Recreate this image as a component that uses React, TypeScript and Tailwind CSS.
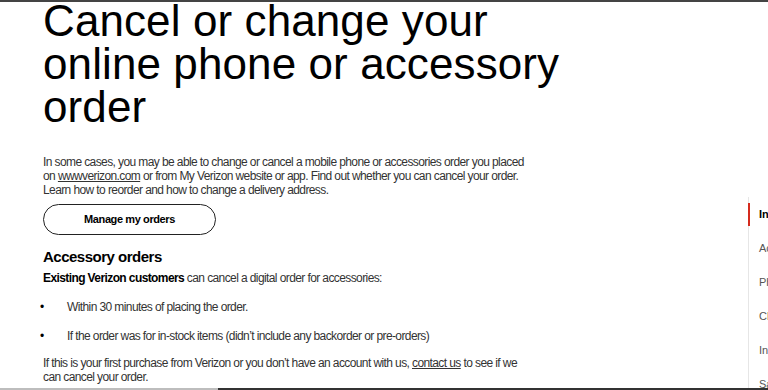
import React from "react";

const sideNav = ["Introduction", "Accessory orders", "Phone orders", "Change an order", "In-store pickup", "Same day delivery"];

function SideNav() {
  return (
    <nav className="mt-[195px] w-[220px] shrink-0 border-l border-[#e6e6e6]">
      {sideNav.map((label, i) => (
        <div key={label} className="flex h-[34px] items-center">
          <span
            className={
              i === 0
                ? "-ml-px flex h-[23px] items-center border-l-2 border-[#d52b1e] pl-[9px] text-[11px] font-bold text-black"
                : "pl-[10px] text-[11px] text-[#555]"
            }
          >
            {label}
          </span>
        </div>
      ))}
    </nav>
  );
}

export default function App() {
  return (
    <div className="relative h-[390px] w-[768px] overflow-hidden border-t-2 border-[#444] bg-white font-['Liberation_Sans',Arial,sans-serif]">
      <div className="flex">
        <main className="w-[748px] shrink-0 pl-[43px]">
          <h1 className="-mt-[3px] w-[570px] text-[44px] font-normal leading-[43px] tracking-[0.1px] text-black">
            Cancel or change your online phone or accessory order
          </h1>

          <p className="mt-[27px] w-[492px] text-[12px] leading-[14px] tracking-[-0.6px] text-[#333]">
            In some cases, you may be able to change or cancel a mobile phone or accessories order you placed on{" "}
            <a className="underline">wwwverizon.com</a> or from My Verizon website or app. Find out whether you can cancel your order.
            Learn how to reorder and how to change a delivery address.
          </p>

          <button className="mt-[7px] flex h-[31px] w-[173px] items-center justify-center rounded-full border border-[#222] text-[11px] font-bold tracking-[-0.4px] text-black">
            Manage my orders
          </button>

          <h2 className="mt-[13px] text-[15px] font-bold leading-[18px] tracking-[-0.5px] text-black">
            Accessory orders
          </h2>
          <p className="mt-[4px] text-[12px] leading-[16px] tracking-[-0.6px] text-[#333]">
            <b className="font-bold text-black">Existing Verizon customers</b> can cancel a digital order for accessories:
          </p>

          <ul className="mt-[13px] flex flex-col gap-[13px] text-[12px] leading-[16px] tracking-[-0.6px] text-[#333]">
            <li className="flex">
              <span className="-ml-[3px] w-[27px] text-black">•</span>
              Within 30 minutes of placing the order.
            </li>
            <li className="flex">
              <span className="-ml-[3px] w-[27px] text-black">•</span>
              If the order was for in-stock items (didn’t include any backorder or pre-orders)
            </li>
          </ul>

          <p className="mt-[12px] w-[492px] text-[12px] leading-[14px] tracking-[-0.6px] text-[#333]">
            If this is your first purchase from Verizon or you don’t have an account with us, <a className="underline">contact us</a> to
            see if we can cancel your order.
          </p>
        </main>
        <SideNav />
      </div>

      <div className="absolute bottom-0 left-0 flex h-[2px] w-full">
        <div className="w-[218px] bg-[#bdbdbd]" />
        <div className="flex-1 bg-[#333]" />
      </div>
    </div>
  );
}
